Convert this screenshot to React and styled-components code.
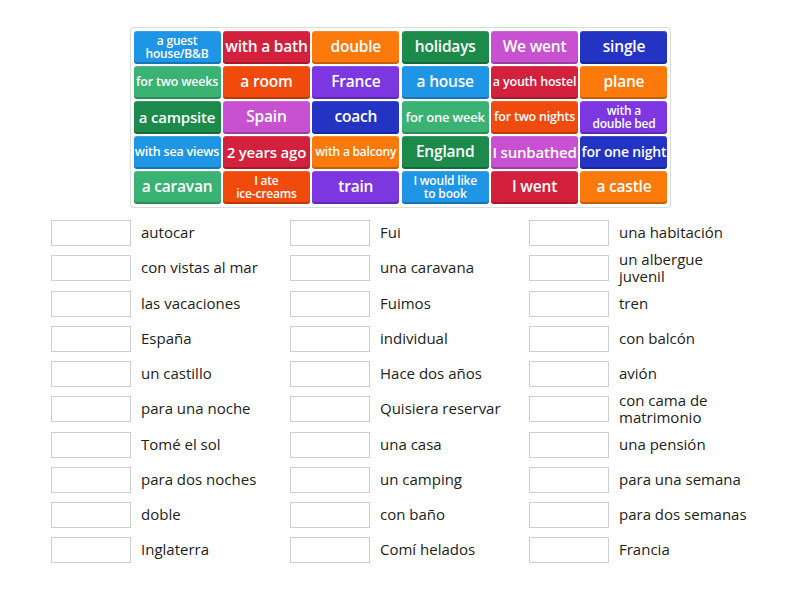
import React from "react"
import styled, { createGlobalStyle } from "styled-components"

const GlobalStyle = createGlobalStyle`
  body {
    margin: 0;
    background: #fff;
    font-family: "Open Sans", "Noto Sans", sans-serif;
  }
`

const palette = [
  "#1f95e5", // blue
  "#d3203c", // red
  "#fb7a0b", // orange
  "#1c8a4b", // dark green
  "#c751d1", // pink
  "#2334c5", // dark blue
  "#39b273", // light green
  "#f04b0d", // orange red
  "#7c37e1", // purple
]

// text, font size, two lines
const tiles = [
  ["a guest\nhouse/B&B", 12, true],
  ["with a bath", 15.5],
  ["double", 15.5],
  ["holidays", 15.5],
  ["We went", 15.5],
  ["single", 15.5],
  ["for two weeks", 12.5],
  ["a room", 15.5],
  ["France", 15.5],
  ["a house", 15.5],
  ["a youth hostel", 12.5],
  ["plane", 15.5],
  ["a campsite", 15],
  ["Spain", 15.5],
  ["coach", 15.5],
  ["for one week", 13],
  ["for two nights", 12.5],
  ["with a\ndouble bed", 12, true],
  ["with sea views", 12.5],
  ["2 years ago", 15],
  ["with a balcony", 12],
  ["England", 15.5],
  ["I sunbathed", 15],
  ["for one night", 14],
  ["a caravan", 15.5],
  ["I ate\nice-creams", 12, true],
  ["train", 15.5],
  ["I would like\nto book", 12, true],
  ["I went", 15.5],
  ["a castle", 15.5],
]

const columns = [
  [
    "autocar",
    "con vistas al mar",
    "las vacaciones",
    "España",
    "un castillo",
    "para una noche",
    "Tomé el sol",
    "para dos noches",
    "doble",
    "Inglaterra",
  ],
  [
    "Fui",
    "una caravana",
    "Fuimos",
    "individual",
    "Hace dos años",
    "Quisiera reservar",
    "una casa",
    "un camping",
    "con baño",
    "Comí helados",
  ],
  [
    "una habitación",
    "un albergue juvenil",
    "tren",
    "con balcón",
    "avión",
    "con cama de matrimonio",
    "una pensión",
    "para una semana",
    "para dos semanas",
    "Francia",
  ],
]

const Page = styled.div`
  width: 800px;
  height: 600px;
  overflow: hidden;
  padding-top: 27px;
  box-sizing: border-box;
`

const TileBoard = styled.div`
  width: 541px;
  margin: 0 auto;
  box-sizing: border-box;
  border: 1px solid #dcdcdc;
  border-radius: 3px;
  padding: 3px;
  display: grid;
  grid-template-columns: repeat(6, 87px);
  grid-auto-rows: 33px;
  column-gap: 2.4px;
  row-gap: 2px;
`

const Tile = styled.div`
  background: ${p => p.$bg};
  color: #fff;
  border-radius: 3px;
  box-shadow: inset 0 -2px 0 rgba(0, 0, 0, 0.22), inset 0 1px 0 rgba(255, 255, 255, 0.12);
  display: flex;
  align-items: center;
  justify-content: center;
  text-align: center;
  font-size: ${p => p.$size}px;
  font-weight: 600;
  line-height: ${p => (p.$wrap ? "13px" : "1")};
  padding: 0 1px 1px;
  white-space: ${p => (p.$wrap ? "pre-line" : "nowrap")};
  letter-spacing: -0.2px;
`

const MatchArea = styled.div`
  display: grid;
  grid-template-columns: repeat(3, 239px);
  padding-left: 51px;
  margin-top: 7.5px;
`

const MatchColumn = styled.div`
  display: flex;
  flex-direction: column;
`

const MatchRow = styled.div`
  height: 35.25px;
  display: flex;
  align-items: center;
  gap: 10px;
`

const DropBox = styled.div`
  width: 80px;
  height: 26px;
  flex: none;
  box-sizing: border-box;
  border: 1px solid #cfcfcf;
  background: #fff;
`

const Label = styled.div`
  max-width: 130px;
  font-size: 15px;
  line-height: 17px;
  color: #222;
  margin-top: -1px;
`

export default function App() {
  return (
    <Page>
      <GlobalStyle />
      <TileBoard>
        {tiles.map(([text, size, wrap], i) => (
          <Tile key={i} $bg={palette[i % 9]} $size={size} $wrap={wrap}>
            {text}
          </Tile>
        ))}
      </TileBoard>
      <MatchArea>
        {columns.map((col, c) => (
          <MatchColumn key={c}>
            {col.map(word => (
              <MatchRow key={word}>
                <DropBox />
                <Label>{word}</Label>
              </MatchRow>
            ))}
          </MatchColumn>
        ))}
      </MatchArea>
    </Page>
  )
}
